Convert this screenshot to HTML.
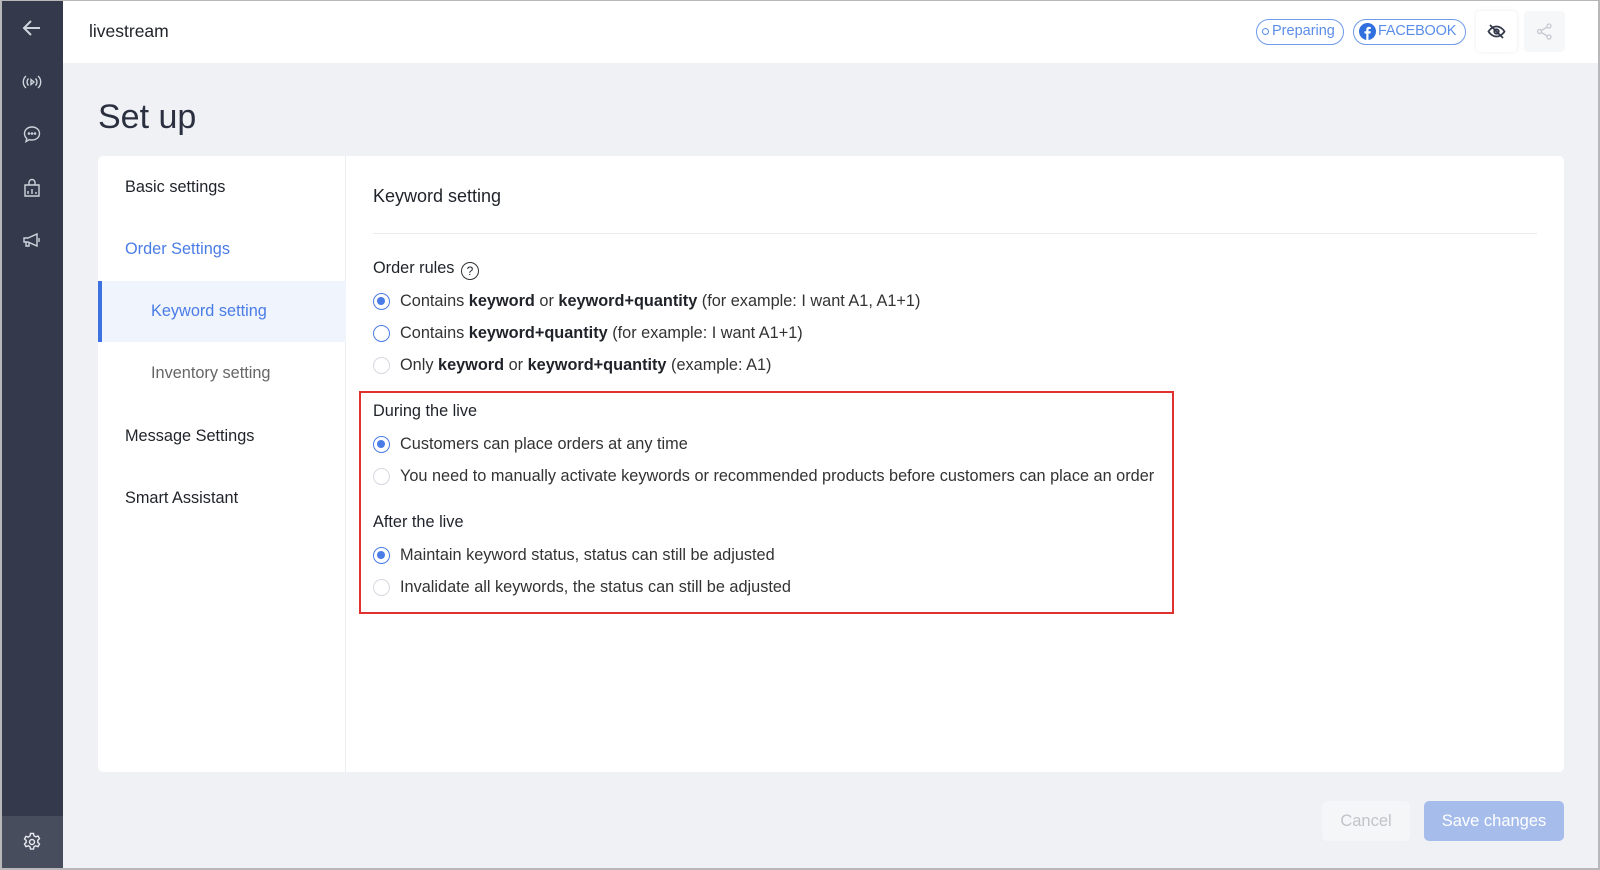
<!DOCTYPE html>
<html><head><meta charset="utf-8"><style>
*{box-sizing:border-box;margin:0;padding:0}
body{width:1600px;height:870px;overflow:hidden;font-family:"Liberation Sans",sans-serif;background:#f0f1f5;position:relative;color:#1f2329}
.frame{position:absolute;left:0;top:0;width:1600px;height:870px;border:2px solid #b8b8bb;border-top-width:1px}
.side{position:absolute;left:2px;top:1px;width:61px;height:867px;background:#343a4b}
.side .bot{position:absolute;left:0;bottom:0;width:61px;height:52px;background:#474d5d}
.side svg{position:absolute;left:19px}
.hdr{position:absolute;left:63px;top:1px;right:2px;height:62px;background:#fff}
.hdr .t{position:absolute;left:26px;top:20px;font-size:17.5px;color:#1f2329}
.chip{position:absolute;top:18px;height:26px;border:1.5px solid #6f9be8;border-radius:13px;color:#5b8ee8;font-size:14.5px;line-height:23px;white-space:nowrap}
.ib{position:absolute;top:10px;width:41px;height:41px;border-radius:4px}
h1{position:absolute;left:98px;top:98px;font-size:34px;font-weight:normal;color:#2b3040}
.card{position:absolute;left:98px;top:156px;width:1466px;height:616px;background:#fff;border-radius:5px}
.menu{position:absolute;left:0;top:0;width:248px;height:616px;border-right:1px solid #eceef2}
.mi{position:absolute;left:27px;font-size:16.3px;color:#1f2329}
.act{position:absolute;left:0;top:125px;width:248px;height:61px;background:#f0f4fd;border-left:4px solid #3d73e0}
.ct{position:absolute;left:275px;font-size:16.3px;color:#333}
.r{position:absolute;left:275px;font-size:16.3px;color:#333;display:flex;align-items:center;white-space:nowrap}
.r i{display:inline-block;width:17px;height:17px;border-radius:50%;border:1.5px solid #d5d8de;margin-right:10px;position:relative}
.r i.on{border-color:#4a7ce6}
.r i.on:after{content:"";position:absolute;left:3px;top:3px;width:8px;height:8px;border-radius:50%;background:#4a7ce6}
.r i.bl{border-color:#4a7ce6}
.r b{color:#1f2329}
.btn{position:absolute;top:801px;height:40px;border-radius:5px;font-size:16.5px;text-align:center;line-height:40px}
</style></head><body>
<div class="side">
<svg style="top:16px" width="22" height="22" viewBox="0 0 22 22" fill="none" stroke="#cfd3dc" stroke-width="2"><path d="M19 11H3M10 4l-7 7 7 7"/></svg>
<svg style="top:70px" width="22" height="22" viewBox="0 0 22 22" fill="none" stroke="#cfd3dc" stroke-width="1.4"><path d="M5 5a8 8 0 0 0 0 12M17 5a8 8 0 0 1 0 12M7.5 7.5a5 5 0 0 0 0 7M14.5 7.5a5 5 0 0 1 0 7"/><path d="M10 8.5l3 2.5-3 2.5z"/></svg>
<svg style="top:122px" width="22" height="22" viewBox="0 0 22 22" fill="none" stroke="#cfd3dc" stroke-width="1.4"><path d="M11 4c4.4 0 7.5 2.8 7.5 6.5S15.4 17 11 17c-1 0-2-.1-2.8-.4L5 18.5l.8-3C4.3 14.3 3.5 12.6 3.5 10.5 3.5 6.8 6.6 4 11 4z"/><circle cx="8" cy="10.5" r=".6"/><circle cx="11" cy="10.5" r=".6"/><circle cx="14" cy="10.5" r=".6"/></svg>
<svg style="top:176px" width="22" height="22" viewBox="0 0 22 22" fill="none" stroke="#cfd3dc" stroke-width="1.4"><path d="M4 8h14v11H4zM8 8V5.5a3 3 0 0 1 6 0V8M7 17v-3M11 17v-5M15 17v-2"/></svg>
<svg style="top:228px" width="22" height="22" viewBox="0 0 22 22" fill="none" stroke="#cfd3dc" stroke-width="1.4"><path d="M3 9h4l9-4v12l-9-4H3zM5 13v4h3v-4M18 9v4"/></svg>
<div class="bot"><svg style="top:15px" width="22" height="22" viewBox="0 0 22 22" fill="none" stroke="#e8eaf0" stroke-width="1.4"><circle cx="11" cy="11" r="2.5"/><path d="M9.5 2.5h3l.5 2.3 1.8 1 2.2-.8 1.5 2.6-1.7 1.6v2.2l1.7 1.6-1.5 2.6-2.2-.8-1.8 1-.5 2.3h-3l-.5-2.3-1.8-1-2.2.8-1.5-2.6 1.7-1.6V9.5L3.5 7.9 5 5.3l2.2.8 1.8-1z"/></svg></div>
</div>
<div class="hdr"><div class="t">livestream</div>
<div class="chip" style="left:1193px;width:88px;padding-left:15px">Preparing<span style="position:absolute;left:5px;top:8px;width:7px;height:7px;border:1.5px solid #5b8ee8;border-radius:50%"></span></div>
<div class="chip" style="left:1290px;width:113px;padding-left:24px;letter-spacing:-.2px">FACEBOOK<svg style="position:absolute;left:5px;top:3px" width="17" height="17" viewBox="0 0 17 17"><circle cx="8.5" cy="8.5" r="8.5" fill="#2f6fde"/><path d="M9.5 17V10.5h2l.3-2.2H9.5V7c0-.6.2-1 1-1h1.3V4a16 16 0 0 0-1.9-.1C8.3 3.9 7.3 4.9 7.3 6.6v1.7H5.5v2.2h1.8V17z" fill="#fff"/></svg></div>
<div class="ib" style="left:1413px;background:#fff;box-shadow:0 0 4px rgba(0,0,0,.08)"><svg style="position:absolute;left:11px;top:11px" width="19" height="19" viewBox="0 0 19 19" fill="none" stroke="#343a4b" stroke-width="1.8"><path d="M1.5 9.5S4.5 4.5 9.5 4.5s8 5 8 5-3 5-8 5-8-5-8-5z"/><circle cx="9.5" cy="9.5" r="2.2"/><path d="M3 3l13 13"/></svg></div>
<div class="ib" style="left:1461px;background:#f6f7f9"><svg style="position:absolute;left:11px;top:11px" width="19" height="19" viewBox="0 0 19 19" fill="none" stroke="#c5c8d0" stroke-width="1.3"><circle cx="14" cy="4" r="2"/><circle cx="4.5" cy="9.5" r="2"/><circle cx="14" cy="15" r="2"/><path d="M6.3 8.5l5.9-3.4M6.3 10.5l5.9 3.4"/></svg></div>
</div>
<h1>Set up</h1>
<div class="card">
<div class="menu">
<div class="act"></div>
<div class="mi" style="top:22px">Basic settings</div>
<div class="mi" style="top:84px;color:#4a7ce6">Order Settings</div>
<div class="mi" style="top:146px;left:53px;color:#4a7ce6">Keyword setting</div>
<div class="mi" style="top:208px;left:53px;color:#666">Inventory setting</div>
<div class="mi" style="top:271px">Message Settings</div>
<div class="mi" style="top:333px">Smart Assistant</div>
</div>
<div class="ct" style="top:30px;font-size:18px;color:#1f2329">Keyword setting</div>
<div style="position:absolute;left:275px;top:77px;width:1164px;height:1px;background:#e8eaee"></div>
<div class="ct" style="top:103px;color:#1f2329">Order rules <span style="display:inline-block;width:18px;height:18px;border:1.3px solid #333;border-radius:50%;font-size:12px;text-align:center;line-height:16px;vertical-align:-2px;margin-left:2px">?</span></div>
<div class="r" style="top:136px"><i class="on"></i>Contains&nbsp;<b>keyword</b>&nbsp;or&nbsp;<b>keyword+quantity</b>&nbsp;(for example: I want A1, A1+1)</div>
<div class="r" style="top:168px"><i class="bl"></i>Contains&nbsp;<b>keyword+quantity</b>&nbsp;(for example: I want A1+1)</div>
<div class="r" style="top:200px"><i></i>Only&nbsp;<b>keyword</b>&nbsp;or&nbsp;<b>keyword+quantity</b>&nbsp;(example: A1)</div>
<div style="position:absolute;left:261px;top:235px;width:815px;height:223px;border:2px solid #e0312e"></div>
<div class="ct" style="top:246px;color:#1f2329">During the live</div>
<div class="r" style="top:279px"><i class="on"></i>Customers can place orders at any time</div>
<div class="r" style="top:311px"><i></i>You need to manually activate keywords or recommended products before customers can place an order</div>
<div class="ct" style="top:357px;color:#1f2329">After the live</div>
<div class="r" style="top:390px"><i class="on"></i>Maintain keyword status, status can still be adjusted</div>
<div class="r" style="top:422px"><i></i>Invalidate all keywords, the status can still be adjusted</div>
</div>
<div class="btn" style="left:1322px;width:88px;background:#f5f6f7;color:#c0c3c9">Cancel</div>
<div class="btn" style="left:1424px;width:140px;background:#a6bdec;color:#fff">Save changes</div>
<div class="frame"></div>
</body></html>
